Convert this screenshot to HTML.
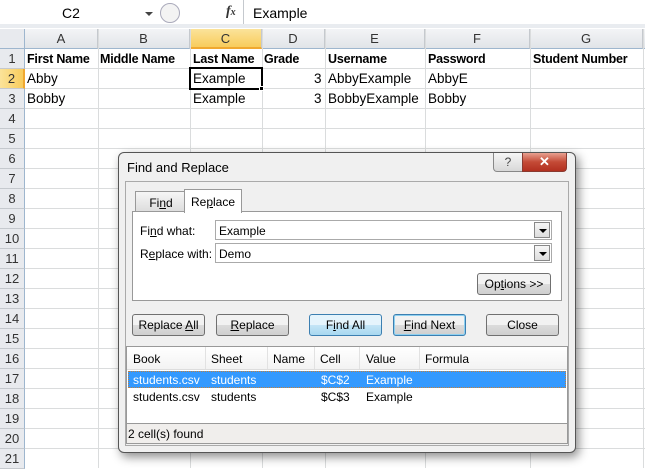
<!DOCTYPE html><html><head><style>
*{box-sizing:border-box;margin:0;padding:0}
body{width:645px;height:468px;overflow:hidden;background:#fff;font-family:"Liberation Sans",sans-serif;position:relative;font-size:13px}
.a{position:absolute}
.hl{position:absolute;left:0;width:645px;height:1px;background:#dadcdd}
.vl{position:absolute;top:29px;height:439px;width:1px;background:#dadcdd}
.ch{position:absolute;top:29px;height:20px;background:linear-gradient(#f3f4f6,#e1e4e8);border-right:1px solid #c5c9ce;border-bottom:1px solid #9eb6ce;text-align:center;line-height:20px;color:#333;font-size:13px}
.rh{position:absolute;left:0;width:25px;height:20px;background:#e8eaee;border-bottom:1px solid #c5c9ce;border-right:1px solid #9eb6ce;text-align:center;line-height:20px;color:#333;font-size:13px}
.c{position:absolute;height:20px;line-height:20px;font-size:13.5px;white-space:nowrap}
.b{font-weight:bold;font-size:12.5px;letter-spacing:-0.2px}
.btn{position:absolute;top:314px;height:22px;width:73px;border:1px solid #707070;border-radius:3px;background:linear-gradient(#f2f2f2 50%,#dcdcdc 50%,#cfcfcf);font-size:12px;text-align:center;line-height:20px}
.d{font-size:12px;color:#000}
</style></head><body>
<div class="a" style="left:0;top:0;width:645px;height:27px;background:#fff;border-bottom:1px solid #c5c9ce"></div>
<div class="a" style="left:0;top:24px;width:645px;height:4px;background:#e9ecf0"></div>
<div class="a" style="left:62px;top:5px;font-size:14px">C2</div>
<div class="a" style="left:145px;top:12px;width:0;height:0;border-left:4px solid transparent;border-right:4px solid transparent;border-top:4px solid #444"></div>
<div class="a" style="left:160px;top:3px;width:20px;height:20px;border:1px solid #aab;border-radius:10px;background:#f3f3f3"></div>
<div class="a" style="left:226px;top:4px;font-family:'Liberation Serif',serif;font-style:italic;font-weight:bold;font-size:14px;color:#333">f<span style="font-size:10px">x</span></div>
<div class="a" style="left:243px;top:0;width:1px;height:24px;background:#c5c9ce"></div>
<div class="a" style="left:253px;top:5px;font-size:14px">Example</div>
<div class="a" style="left:0;top:29px;width:25px;height:20px;background:#e8eaee;border-right:1px solid #9eb6ce;border-bottom:1px solid #9eb6ce"></div>
<div class="ch" style="left:25px;width:73px">A</div>
<div class="ch" style="left:98px;width:92px">B</div>
<div class="ch" style="left:190px;width:72px;background:linear-gradient(#fbe39a,#f8cc5c);border-bottom:2px solid #f0a830">C</div>
<div class="ch" style="left:262px;width:63px">D</div>
<div class="ch" style="left:325px;width:100px">E</div>
<div class="ch" style="left:425px;width:105px">F</div>
<div class="ch" style="left:530px;width:113px">G</div>
<div class="ch" style="left:643px;width:4px"></div>
<div class="vl" style="left:98px"></div><div class="vl" style="left:190px"></div><div class="vl" style="left:262px"></div><div class="vl" style="left:325px"></div><div class="vl" style="left:425px"></div><div class="vl" style="left:530px"></div><div class="vl" style="left:643px"></div>
<div class="hl" style="top:68px"></div><div class="hl" style="top:88px"></div><div class="hl" style="top:108px"></div><div class="hl" style="top:128px"></div><div class="hl" style="top:148px"></div><div class="hl" style="top:168px"></div><div class="hl" style="top:188px"></div><div class="hl" style="top:208px"></div><div class="hl" style="top:228px"></div><div class="hl" style="top:248px"></div><div class="hl" style="top:268px"></div><div class="hl" style="top:288px"></div><div class="hl" style="top:308px"></div><div class="hl" style="top:328px"></div><div class="hl" style="top:348px"></div><div class="hl" style="top:368px"></div><div class="hl" style="top:388px"></div><div class="hl" style="top:408px"></div><div class="hl" style="top:428px"></div><div class="hl" style="top:448px"></div>
<div class="rh" style="top:49px">1</div>
<div class="rh" style="top:69px;background:linear-gradient(90deg,#fbe39a,#f8cc5c);border-right:2px solid #f0a830">2</div>
<div class="rh" style="top:89px">3</div><div class="rh" style="top:109px">4</div><div class="rh" style="top:129px">5</div><div class="rh" style="top:149px">6</div><div class="rh" style="top:169px">7</div><div class="rh" style="top:189px">8</div><div class="rh" style="top:209px">9</div><div class="rh" style="top:229px">10</div><div class="rh" style="top:249px">11</div><div class="rh" style="top:269px">12</div><div class="rh" style="top:289px">13</div><div class="rh" style="top:309px">14</div><div class="rh" style="top:329px">15</div><div class="rh" style="top:349px">16</div><div class="rh" style="top:369px">17</div><div class="rh" style="top:389px">18</div><div class="rh" style="top:409px">19</div><div class="rh" style="top:429px">20</div><div class="rh" style="top:449px">21</div>
<div class="c b" style="left:27px;top:49px">First Name</div>
<div class="c b" style="left:100px;top:49px">Middle Name</div>
<div class="c b" style="left:193px;top:49px">Last Name</div>
<div class="c b" style="left:264px;top:49px">Grade</div>
<div class="c b" style="left:328px;top:49px">Username</div>
<div class="c b" style="left:428px;top:49px">Password</div>
<div class="c b" style="left:533px;top:49px">Student Number</div>
<div class="c" style="left:27px;top:69px">Abby</div>
<div class="c" style="left:193px;top:69px">Example</div>
<div class="c" style="left:314px;top:69px">3</div>
<div class="c" style="left:328px;top:69px">AbbyExample</div>
<div class="c" style="left:428px;top:69px">AbbyE</div>
<div class="c" style="left:27px;top:89px">Bobby</div>
<div class="c" style="left:193px;top:89px">Example</div>
<div class="c" style="left:314px;top:89px">3</div>
<div class="c" style="left:328px;top:89px">BobbyExample</div>
<div class="c" style="left:428px;top:89px">Bobby</div>
<div class="a" style="left:189px;top:67px;width:74px;height:23px;border:2px solid #000"></div>
<div class="a" style="left:259px;top:86px;width:5px;height:5px;background:#000;border:1px solid #fff"></div>
<div class="a" style="left:118px;top:152px;width:458px;height:301px;border:1px solid #555;border-radius:6px;background:#f0f0f0;box-shadow:3px 4px 10px rgba(0,0,0,.45)"></div>
<div class="a d" style="left:127px;top:160px;font-size:13px">Find and Replace</div>
<div class="a" style="left:493px;top:153px;width:30px;height:19px;border:1px solid #888;border-top:none;border-radius:0 0 0 4px;background:linear-gradient(#f6f6f6,#d8d8d8);text-align:center;font-size:12px;line-height:18px;color:#444">?</div>
<div class="a" style="left:522px;top:153px;width:45px;height:19px;border:1px solid #8a3a30;border-top:none;border-radius:0 0 4px 0;background:linear-gradient(#e8a090,#c44a36 50%,#b23020);text-align:center;font-size:13px;font-weight:bold;line-height:18px;color:#fff">✕</div>
<div class="a" style="left:125px;top:181px;width:444px;height:265px;border:1px solid #aaa;background:#f0f0f0"></div>
<div class="a" style="left:135px;top:191px;width:52px;height:21px;border:1px solid #999;border-bottom:none;background:linear-gradient(#f6f6f6,#dcdcdc);font-size:12px;text-align:center;line-height:22px">Fi<u>n</u>d</div>
<div class="a" style="left:132px;top:211px;width:430px;height:90px;border:1px solid #999;background:#fff"></div>
<div class="a" style="left:184px;top:189px;width:58px;height:24px;border:1px solid #999;border-bottom:none;background:#fff;font-size:12px;text-align:center;line-height:24px">Re<u>p</u>lace</div>
<div class="a d" style="left:140px;top:224px">Fi<u>n</u>d what:</div>
<div class="a d" style="left:140px;top:247px">R<u>e</u>place with:</div>
<div class="a" style="left:215px;top:220px;width:337px;height:20px;border:1px solid #aaa;background:#fff"><span class="d" style="position:absolute;left:3px;top:3px">Example</span><div class="a" style="right:1px;top:1px;width:16px;height:16px;border:1px solid #888;background:linear-gradient(#f6f6f6,#ddd)"><div class="a" style="left:4px;top:6px;border-left:4px solid transparent;border-right:4px solid transparent;border-top:4px solid #000"></div></div></div>
<div class="a" style="left:215px;top:243px;width:337px;height:20px;border:1px solid #aaa;background:#fff"><span class="d" style="position:absolute;left:3px;top:3px">Demo</span><div class="a" style="right:1px;top:1px;width:16px;height:16px;border:1px solid #888;background:linear-gradient(#f6f6f6,#ddd)"><div class="a" style="left:4px;top:6px;border-left:4px solid transparent;border-right:4px solid transparent;border-top:4px solid #000"></div></div></div>
<div class="btn" style="left:477px;top:273px;width:74px">Op<u>t</u>ions &gt;&gt;</div>
<div class="btn" style="left:132px">Replace <u>A</u>ll</div>
<div class="btn" style="left:216px"><u>R</u>eplace</div>
<div class="btn" style="left:309px;border-color:#3c7fb1;background:linear-gradient(#e5f4fc 50%,#c4e5f6 50%,#a8d8f0)">F<u>i</u>nd All</div>
<div class="btn" style="left:393px;border-color:#3c7fb1;box-shadow:inset 0 0 0 1px #8ed0f0"><u>F</u>ind Next</div>
<div class="btn" style="left:486px">Close</div>
<div class="a" style="left:126px;top:346px;width:442px;height:78px;border:1px solid #999;background:#fff"></div>
<div class="a" style="left:127px;top:347px;width:440px;height:23px;background:linear-gradient(#fff,#f3f3f3);border-bottom:1px solid #ddd"></div>
<div class="a d" style="left:133px;top:352px">Book</div>
<div class="a d" style="left:211px;top:352px">Sheet</div>
<div class="a d" style="left:273px;top:352px">Name</div>
<div class="a d" style="left:320px;top:352px">Cell</div>
<div class="a d" style="left:366px;top:352px">Value</div>
<div class="a d" style="left:425px;top:352px">Formula</div>
<div class="a" style="left:205px;top:347px;width:1px;height:22px;background:#e2e2e2"></div>
<div class="a" style="left:267px;top:347px;width:1px;height:22px;background:#e2e2e2"></div>
<div class="a" style="left:314px;top:347px;width:1px;height:22px;background:#e2e2e2"></div>
<div class="a" style="left:359px;top:347px;width:1px;height:22px;background:#e2e2e2"></div>
<div class="a" style="left:419px;top:347px;width:1px;height:22px;background:#e2e2e2"></div>
<div class="a" style="left:128px;top:371px;width:438px;height:17px;background:#3399ff;border:1px dotted #c08040"></div>
<div class="a d" style="left:133px;top:373px;color:#fff">students.csv</div><div class="a d" style="left:211px;top:373px;color:#fff">students</div><div class="a d" style="left:321px;top:373px;color:#fff">$C$2</div><div class="a d" style="left:366px;top:373px;color:#fff">Example</div>
<div class="a d" style="left:133px;top:390px">students.csv</div><div class="a d" style="left:211px;top:390px">students</div><div class="a d" style="left:321px;top:390px">$C$3</div><div class="a d" style="left:366px;top:390px">Example</div>
<div class="a" style="left:126px;top:424px;width:442px;height:20px;border:1px solid #999;border-top:none;background:#f0eeec"></div>
<div class="a d" style="left:128px;top:427px">2 cell(s) found</div>
</body></html>
